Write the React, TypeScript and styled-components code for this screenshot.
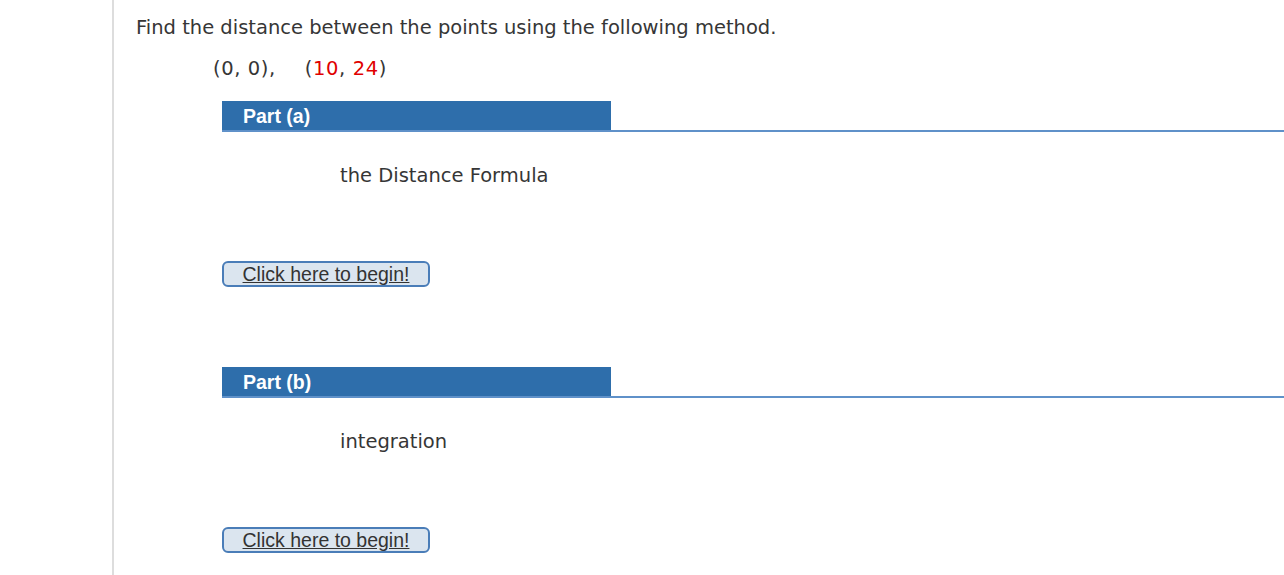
import React from 'react';
import styled, {createGlobalStyle} from 'styled-components';

const Global = createGlobalStyle`
  html, body {
    margin: 0;
    padding: 0;
    background: #ffffff;
  }
`;

const Page = styled.div`
  display: flex;
  min-height: 575px;
  font-family: "DejaVu Sans", Verdana, sans-serif;
  color: #363636;
`;

const Sidebar = styled.div`
  width: 112px;
  flex-shrink: 0;
  border-right: 2px solid #dddddd;
`;

const Main = styled.div`
  flex: 1;
  padding-top: 17px;
`;

const Question = styled.div`
  margin-left: 22px;
  font-size: 19.5px;
  line-height: 22px;
`;

const Points = styled.div`
  margin: 19px 0 0 99px;
  font-size: 19.5px;
  line-height: 22px;
  letter-spacing: 0.6px;
  display: flex;
  gap: 29px;
  .num {
    color: #e00000;
  }
`;

const Part = styled.section<{$top: number}>`
  margin: ${p => p.$top}px 0 0 108px;
`;

const PartHeader = styled.div`
  display: flex;
  border-bottom: 2px solid #5f91c9;
`;

const Tab = styled.div`
  width: 368px;
  height: 29px;
  padding-left: 21px;
  background: #2e6eab;
  color: #ffffff;
  font-family: "Liberation Sans", Arial, sans-serif;
  font-weight: bold;
  font-size: 19.5px;
  line-height: 30px;
`;

const Method = styled.div`
  margin: 33px 0 0 118px;
  font-size: 19.5px;
  line-height: 22px;
`;

const BeginButton = styled.button`
  display: block;
  margin-top: 74px;
  width: 208px;
  height: 26px;
  padding: 0;
  border: 2px solid #4a7db8;
  border-radius: 6px;
  background: #dbe5ef;
  color: #333333;
  font-family: "Liberation Sans", Arial, sans-serif;
  font-size: 19.5px;
  line-height: 22px;
  text-decoration: underline;
  cursor: pointer;
`;

const parts = [
  {label: 'Part (a)', method: 'the Distance Formula', top: 21},
  {label: 'Part (b)', method: 'integration', top: 80},
];

export default function App() {
  return (
    <>
      <Global/>
      <Page>
        <Sidebar/>
        <Main>
          <Question>Find the distance between the points using the following method.</Question>
          <Points>
            <span>(0, 0),</span>
            <span>(<span className="num">10</span>, <span className="num">24</span>)</span>
          </Points>
          {parts.map(p => (
            <Part key={p.label} $top={p.top}>
              <PartHeader>
                <Tab>{p.label}</Tab>
              </PartHeader>
              <Method>{p.method}</Method>
              <BeginButton>Click here to begin!</BeginButton>
            </Part>
          ))}
        </Main>
      </Page>
    </>
  );
}
